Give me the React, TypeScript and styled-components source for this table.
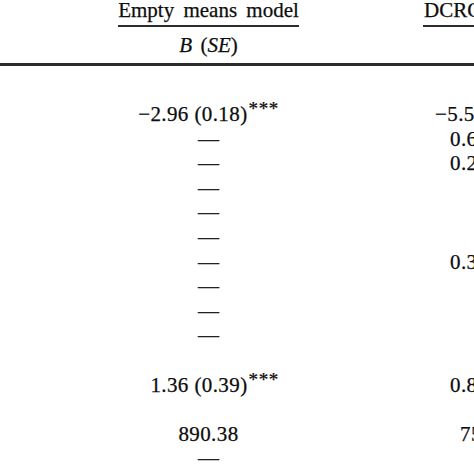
import React from "react";
import styled, { createGlobalStyle } from "styled-components";

const Global = createGlobalStyle`
  html, body { margin: 0; padding: 0; background: #ffffff; }
  #root { width: 474px; height: 474px; overflow: hidden; }
`;

const Table = styled.div`
  width: 474px;
  height: 474px;
  overflow: hidden;
  font-family: "Liberation Serif", "Times New Roman", serif;
  font-size: 21px;
  color: #0d0d0d;
  -webkit-text-stroke: 0.25px #0d0d0d;
  background: #fff;
`;

const Row = styled.div`
  display: grid;
  grid-template-columns: 118px 181px 124px 260px;
  white-space: nowrap;
`;

const HeadRow = styled(Row)`
  line-height: 20px;
`;

const SubHeadRow = styled(Row)`
  line-height: 24px;
  padding: 6px 0;
  border-bottom: 3px solid #2c2c2c;
  width: 683px;
`;

const Body = styled.div`
  padding-top: 36px;
`;

const BodyRow = styled(Row)`
  height: 24.6px;
  line-height: 24.6px;
`;

const Spanner = styled.div<{ $left?: boolean }>`
  text-align: ${(p) => (p.$left ? "left" : "center")};
  padding: 0 0 5px ${(p) => (p.$left ? "1px" : "0")};
  border-bottom: 2px solid #2c2c2c;
  word-spacing: 4px;
`;

const Cell = styled.div<{ $indent?: number }>`
  text-align: ${(p) => (p.$indent === undefined ? "center" : "left")};
  padding-left: ${(p) => p.$indent ?? 0}px;
  letter-spacing: 0.4px;
`;

const SubHead = styled.div`
  text-align: center;
  word-spacing: 3px;
`;

const Italic = styled.i`
  font-style: italic;
`;

const Stars = styled.sup`
  font-size: 19px;
  line-height: 0;
  vertical-align: 6px;
  letter-spacing: 0.6px;
  margin-left: 1px;
`;

const Phantom = styled.span`
  visibility: hidden;
`;

const Dash = styled.span`
  color: #2a2a2a;
  letter-spacing: 0;
`;

type Val = { text: string; stars?: string; neg?: boolean };

const leftVals: (Val | "dash" | null)[] = [
  { text: "−2.96 (0.18)", stars: "***", neg: true },
  "dash",
  "dash",
  "dash",
  "dash",
  "dash",
  "dash",
  "dash",
  "dash",
  "dash",
  null,
  { text: "1.36 (0.39)", stars: "***" },
  null,
  { text: "890.38" },
  "dash",
];

const rightVals: ({ text: string; stars?: string; indent: number } | null)[] = [
  { text: "−5.52 (0.31)", stars: "***", indent: 12 },
  { text: "0.64 (0.08)", stars: "***", indent: 27 },
  { text: "0.27 (0.06)", stars: "***", indent: 27 },
  null,
  null,
  null,
  { text: "0.35 (0.09)", stars: "***", indent: 27 },
  null,
  null,
  null,
  null,
  { text: "0.84 (0.27)", stars: "**", indent: 27 },
  null,
  { text: "753.12", indent: 37 },
  null,
];

function LeftCell({ v }: { v: Val | "dash" | null }) {
  if (v === null) return <Cell />;
  if (v === "dash")
    return (
      <Cell>
        <Dash>—</Dash>
      </Cell>
    );
  const phantom = v.stars && !v.neg;
  return (
    <Cell>
      {phantom && <Phantom>−</Phantom>}
      {v.text}
      {v.stars && <Stars>{v.stars}</Stars>}
    </Cell>
  );
}

export default function App() {
  return (
    <>
      <Global />
      <Table>
        <HeadRow>
          <div />
          <Spanner>Empty means model</Spanner>
          <div />
          <Spanner $left>DCRC model with predictors</Spanner>
        </HeadRow>
        <SubHeadRow>
          <div />
          <SubHead>
            <Italic>B</Italic> (<Italic>SE</Italic>)
          </SubHead>
          <div />
          <div />
        </SubHeadRow>
        <Body>
          {leftVals.map((v, i) => {
            const r = rightVals[i];
            return (
              <BodyRow key={i}>
                <div />
                <LeftCell v={v} />
                <div />
                {r ? (
                  <Cell $indent={r.indent}>
                    {r.text}
                    {r.stars && <Stars>{r.stars}</Stars>}
                  </Cell>
                ) : (
                  <Cell />
                )}
              </BodyRow>
            );
          })}
        </Body>
      </Table>
    </>
  );
}
